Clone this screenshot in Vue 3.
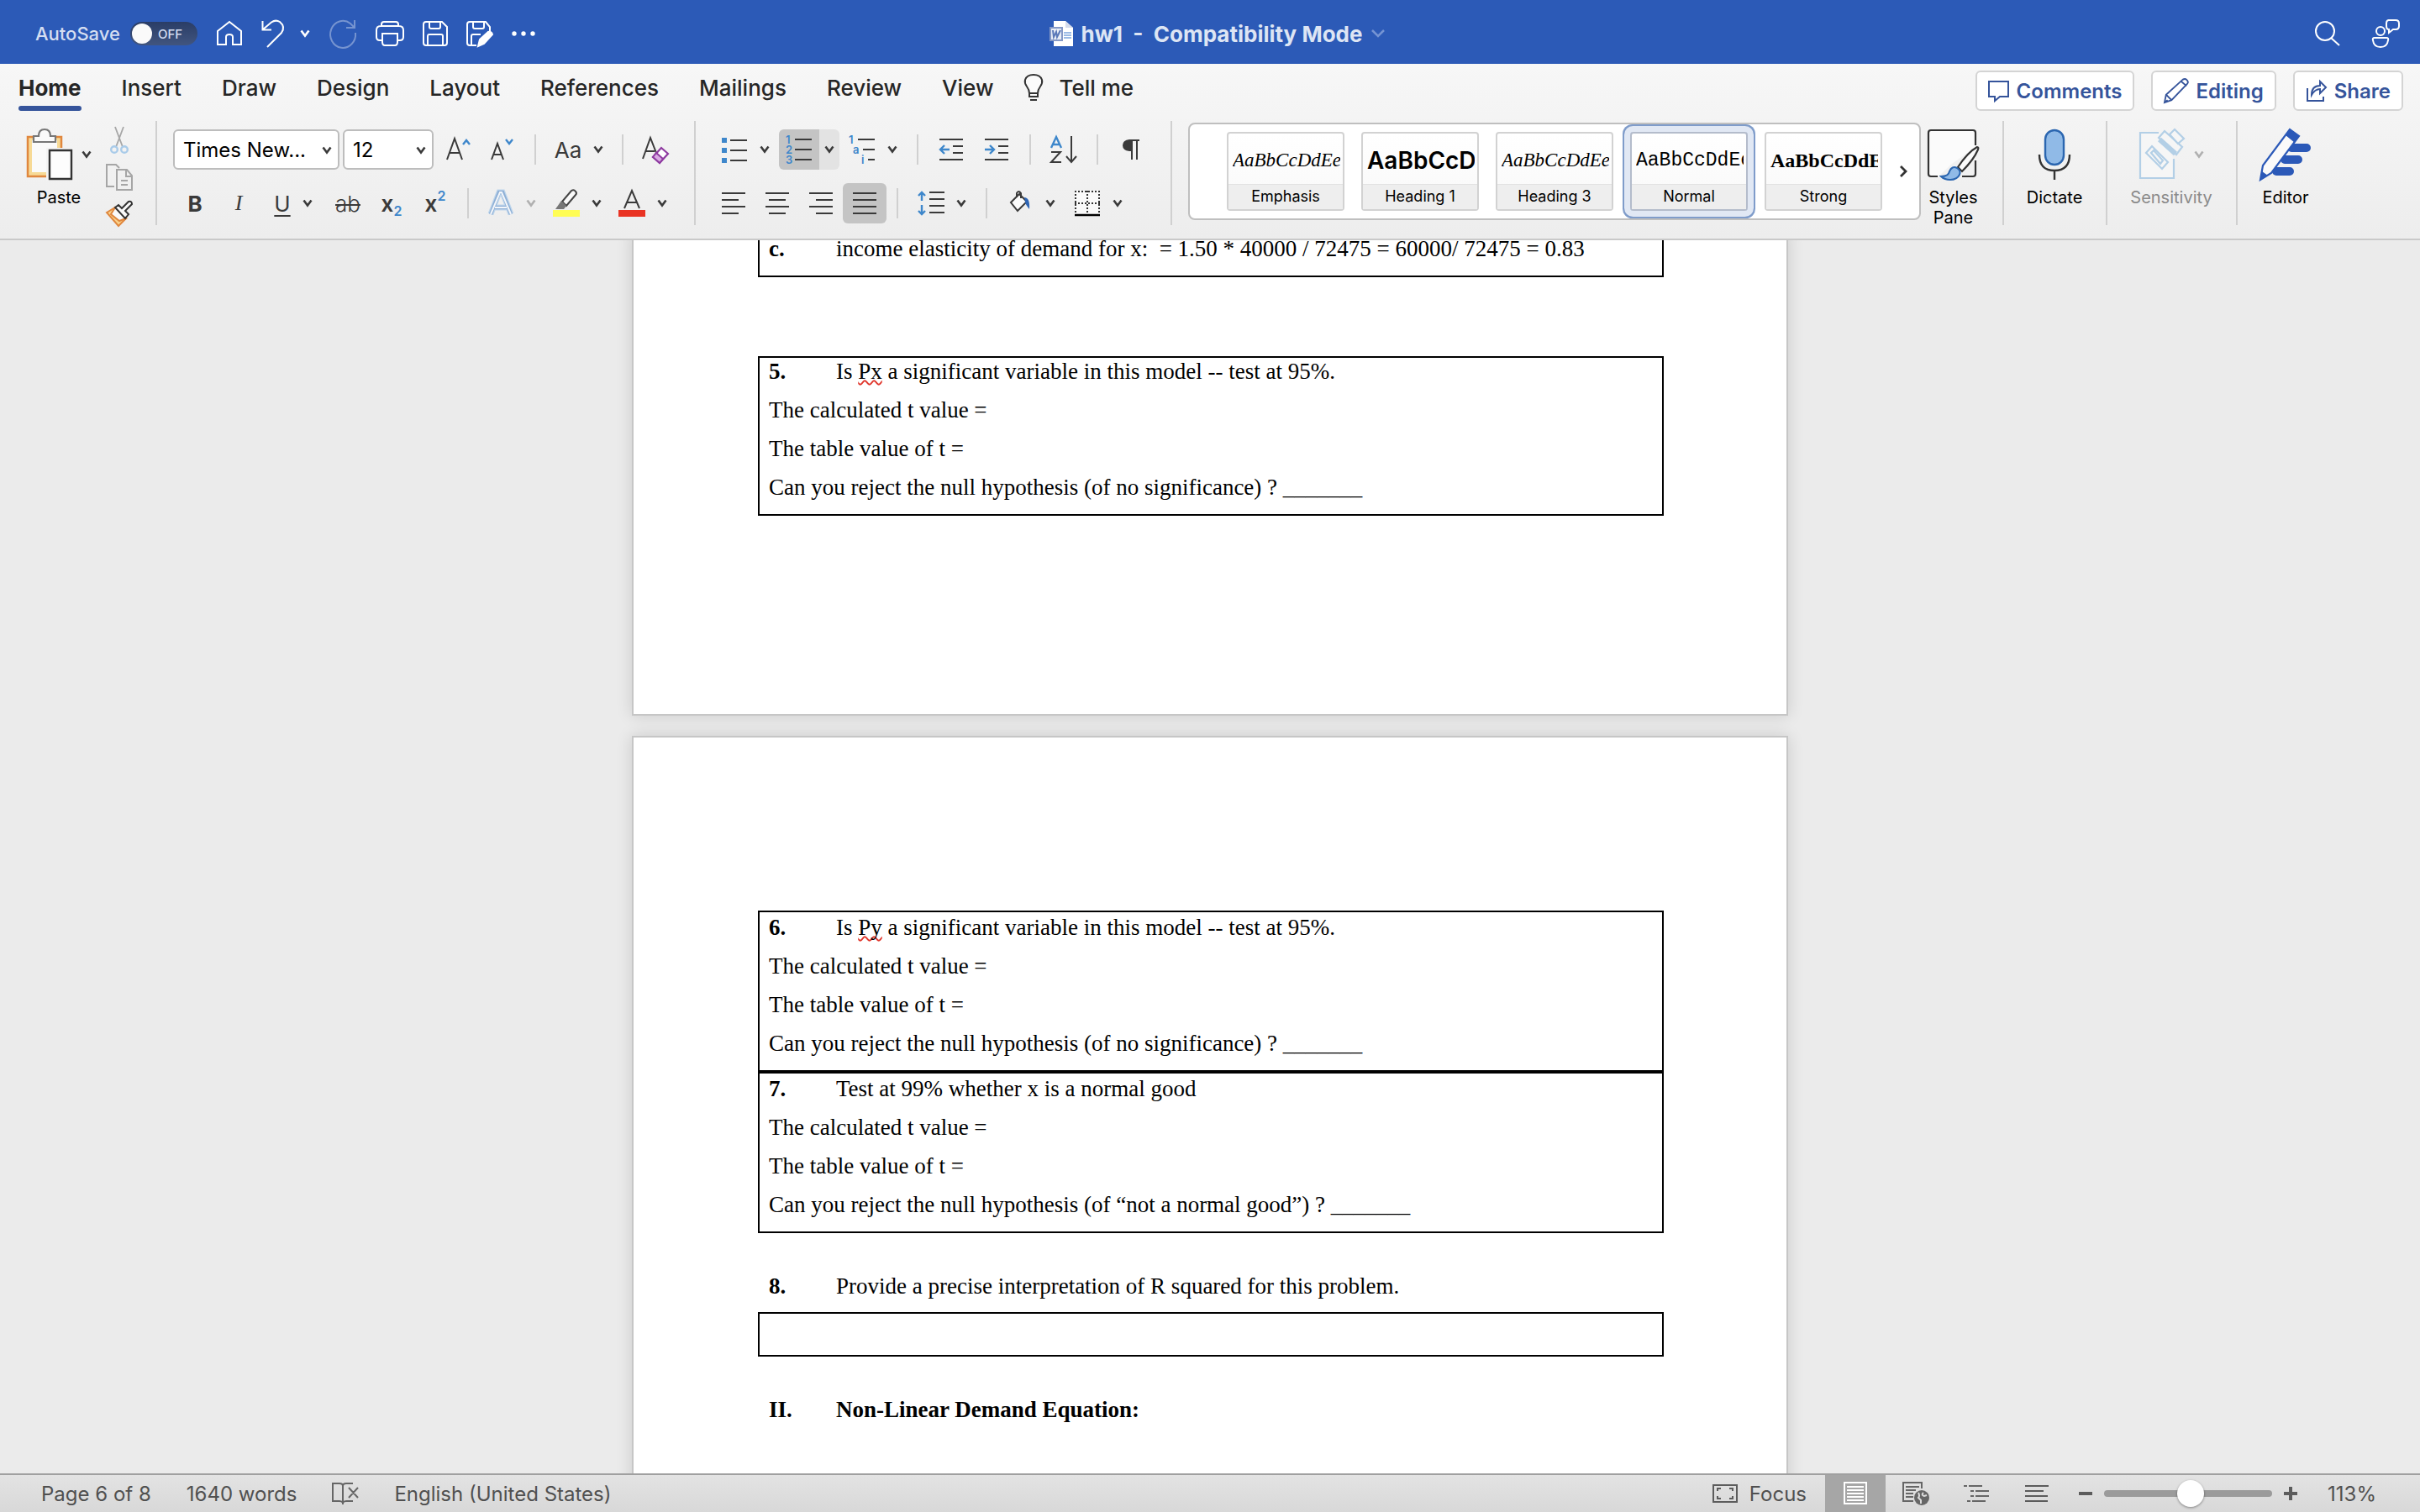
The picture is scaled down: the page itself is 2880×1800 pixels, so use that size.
<script setup>
import {h, ref} from "vue";

const tabs = ['Home', 'Insert', 'Draw', 'Design', 'Layout', 'References', 'Mailings', 'Review', 'View'];
const activeTab = ref('Home');
const autoSave = ref(false);
const fontName = ref('Times New...');
const fontSize = ref('12');
const zoom = ref(52);

const styleCards = [
    {name: 'Emphasis', sample: 'AaBbCcDdEe', look: 'serif-italic'},
    {name: 'Heading 1', sample: 'AaBbCcDd', look: 'sans-bold'},
    {name: 'Heading 3', sample: 'AaBbCcDdEe', look: 'serif-italic'},
    {name: 'Normal', sample: 'AaBbCcDdEe', look: 'mono'},
    {name: 'Strong', sample: 'AaBbCcDdEe', look: 'serif-bold'},
];
const activeStyle = ref('Normal');

const Chevron = () => h('svg', {class: 'chevron', viewBox: '0 0 12 10', width: 12, height: 10}, [
    h('path', {d: 'M1.5 1.5 6 7.5l4.5-6', fill: 'none', stroke: 'currentColor', 'stroke-width': 2.6}),
]);
</script>

<template>
    <div class="word">
        <header class="title-bar">
            <div class="quick-access">
                <label class="autosave">
                    <span>AutoSave</span>
                    <input v-model="autoSave" type="checkbox">
                    <span class="switch"><i></i>OFF</span>
                </label>
                <button aria-label="Home">
                    <svg width="32" height="32" viewBox="0 0 32 32" class="line"><path d="M2 13 16 2l14 11v16H20v-9q0-3-4-3t-4 3v9H2Z"/></svg>
                </button>
                <button aria-label="Undo" class="with-arrow">
                    <svg width="28" height="34" viewBox="0 0 28 34" class="line"><path d="M1.500 2v10.500H12M2 12 12 3.500q5-3.500 10-.5 7 6 2 13L7 33"/></svg>
                    <Chevron/>
                </button>
                <button aria-label="Redo" class="faded">
                    <svg width="34" height="34" viewBox="0 0 34 34" class="line"><path d="M32 16a15 16 0 1 1-6-11l4 4M31 1v9H21"/></svg>
                </button>
                <button aria-label="Print">
                    <svg width="34" height="32" viewBox="0 0 34 32" class="line"><path d="M7 7V5q0-3 3-3h14q3 0 3 3v2M8 24H5q-4 0-4-4v-8q0-5 5-5h22q5 0 5 5v8q0 4-4 4h-3M8 16h18v10q0 4-3 4H11q-3 0-3-4Z"/></svg>
                </button>
                <button aria-label="Save">
                    <svg width="30" height="32" viewBox="0 0 30 32" class="line"><path d="M1 5q0-3 3-3h19l6 6v19q0 3-3 3H4q-3 0-3-3ZM8 2v6q0 2 2 2h9q2 0 2-2V2M6 30V19q0-2 2-2h14q2 0 2 2v11"/></svg>
                </button>
                <button aria-label="Save as">
                    <svg width="32" height="32" viewBox="0 0 32 32" class="line"><path d="M12 30H4q-3 0-3-3V5q0-3 3-3h19l5 6v5M8 2v6q0 2 2 2h9q2 0 2-2V2M6 30V19q0-2 2-2h9"/><path d="m14 31 2-8 10-9q4-1 5 3L21 28Z" fill="#fff"/></svg>
                </button>
                <button aria-label="More commands">
                    <svg width="28" height="8" viewBox="0 0 28 8" fill="#fff"><circle cx="3" cy="4" r="2.700"/><circle cx="14" cy="4" r="2.700"/><circle cx="25" cy="4" r="2.700"/></svg>
                </button>
            </div>
            <h1 class="doc-title">
                <svg width="28" height="30" viewBox="0 0 28 30">
                    <path d="M5 0h14l9 8v22H5Z" fill="#fff"/><path d="M19 0v8h9Z" fill="#d5dcec"/>
                    <path d="M17 14h9M17 17h9M17 20h9" stroke="#7ba4dd" stroke-width="1.300"/>
                    <path d="M1 8h14v15H1Z" fill="#e8edf6" stroke="#8498c6" stroke-width="2"/>
                    <path d="m4 11 1 8 3-6 1 6 4-8" fill="none" stroke="#5b79b8" stroke-width="2"/>
                </svg>
                <span>hw1&nbsp; -&nbsp; Compatibility Mode</span>
                <svg width="18" height="12" viewBox="0 0 18 12"><path d="m2 2 7 7 7-7" fill="none" stroke="#7594d3" stroke-width="2.500"/></svg>
            </h1>
            <div class="title-actions">
                <button aria-label="Search">
                    <svg width="32" height="32" viewBox="0 0 32 32" class="line"><circle cx="13" cy="13" r="11"/><path d="m20 21 10 9"/></svg>
                </button>
                <button aria-label="Account">
                    <svg width="34" height="34" viewBox="0 0 34 34" class="line"><circle cx="11" cy="14" r="5"/><path d="M4 22h14q3 0 2 3-1 8-9 8t-9-8q-1-3 2-3ZM20 1h9q4 0 4 4v3q0 4-4 4h-3l-5 4v-4q-3 0-3-4V5q0-4 3-4Z"/></svg>
                </button>
            </div>
        </header>

        <section class="ribbon">
            <nav class="tabs">
                <button v-for="tab in tabs" :key="tab" class="tab" :class="{active: tab === activeTab}" @click="activeTab = tab">{{ tab }}</button>
                <button class="tab tell-me">
                    <svg width="24" height="32" viewBox="0 0 24 32" fill="none" stroke="#333" stroke-width="2"><path d="M7 23q0-4-3-8-3-4-2-8 2-6 10-6t10 6q1 4-2 8-3 4-3 8ZM7 23v4h10v-4M8 31h8" fill="#fbfbfb"/></svg>
                    Tell me
                </button>
                <div class="tab-actions">
                    <button>
                        <svg width="26" height="26" viewBox="0 0 26 26" class="line"><path d="M1 2h23v18H14l-6 5v-5H1Z"/></svg>
                        Comments
                    </button>
                    <button>
                        <svg width="30" height="32" viewBox="0 0 32 32" class="line"><path d="m1 31 2-10L24 2q3-2 5 0 3 3 1 5L10 28ZM3 21l7 7M22 4l7 6M1 31l4-3"/></svg>
                        Editing
                    </button>
                    <button>
                        <svg width="26" height="26" viewBox="0 0 26 26" class="line"><path d="M2 10v15h19v-5M7 18q0-11 10-11V2l7 7-7 7v-5q-6 0-10 7Z"/></svg>
                        Share
                    </button>
                </div>
            </nav>

            <div class="tools">
                <div class="clipboard">
                    <button class="big">
                        <span class="big-icon">
                            <svg width="56" height="62" viewBox="0 0 56 62">
                                <path d="M2 10h40v47H2Z" fill="#f7da96" stroke="#e0873e" stroke-width="2.500"/><path d="M7 14h30v38H7Z" fill="#fafafa"/>
                                <path d="M9 9h6q0-8 7-8t7 8h6v7H9Z" fill="#fafafa" stroke="#777" stroke-width="2.200"/>
                                <path d="M24 23h32v39H24Z" fill="#f4f4f4"/><path d="M28 26h26v34H28Z" fill="#fdfdfd" stroke="#333" stroke-width="2.400"/>
                            </svg>
                            <Chevron/>
                        </span>
                        Paste
                    </button>
                    <div class="clip-side">
                        <button aria-label="Cut">
                            <svg width="24" height="34" viewBox="0 0 24 34" fill="none" stroke="#a6a6a6" stroke-width="1.800"><path d="m7 1 9 24M17 1 8 25"/><circle cx="6" cy="28" r="3.800" stroke="#a9cbe9" stroke-width="2.400"/><circle cx="18" cy="28" r="3.800" stroke="#a9cbe9" stroke-width="2.400"/></svg>
                        </button>
                        <button aria-label="Copy">
                            <svg width="34" height="34" viewBox="0 0 34 34" fill="none" stroke="#a6a6a6" stroke-width="2"><path d="M11 28H2V2h11l4 4M14 8h12l6 7v17H14ZM25 8v8h7M19 21h8M19 26h8"/></svg>
                        </button>
                        <button aria-label="Format painter">
                            <svg width="34" height="32" viewBox="0 0 34 32" fill="#fafafa" stroke="#333" stroke-width="2"><path d="m2 15 10-6 13 13-9 9Z" fill="#f9d28b" stroke="#e0873e"/><path d="M12 9 7 17l10 8 8-3Z" stroke="#e0873e"/><path d="m12 9 4-3 4 4 8-8q4-1 4 3l-8 8 4 4-4 5Z"/></svg>
                        </button>
                    </div>
                </div>
                <i class="group-line"></i>

                <div class="group">
                    <div class="row">
                        <span class="combo font-name">
                            <select v-model="fontName" aria-label="Font name"><option>Times New...</option></select><Chevron/>
                        </span>
                        <span class="combo font-size">
                            <select v-model="fontSize" aria-label="Font size"><option>12</option></select><Chevron/>
                        </span>
                        <button class="tool" aria-label="Grow font">
                            <svg width="32" height="32" viewBox="0 0 32 32"><path d="m2 28 9-25 9 25M5 20h12" class="ink"/><path d="m21 10 4-5 4 5" class="accent"/></svg>
                        </button>
                        <button class="tool" aria-label="Shrink font">
                            <svg width="32" height="32" viewBox="0 0 32 32"><path d="m3 28 7-19 7 19M5 22h10" class="ink"/><path d="m20 4 4 5 4-5" class="accent"/></svg>
                        </button>
                        <i class="line-sep"></i>
                        <button class="drop" aria-label="Change case"><span class="case">Aa</span><Chevron/></button>
                        <i class="line-sep"></i>
                        <button class="tool" aria-label="Clear formatting">
                            <svg width="34" height="34" viewBox="0 0 34 34"><path d="m2 28 9-25 7 18M5 19h11" class="ink"/><path d="m14 26 10-11 8 7-10 11Z" fill="#fff" stroke="#8e3aa0" stroke-width="2.200"/><path d="m14 26 4-5 8 7-4 5Z" fill="#d9a9e3" stroke="#8e3aa0" stroke-width="2"/></svg>
                        </button>
                    </div>
                    <div class="row">
                        <button class="tool glyph bold">B</button>
                        <button class="tool glyph italic">I</button>
                        <button class="drop glyph" aria-label="Underline"><u>U</u><Chevron/></button>
                        <button class="tool glyph"><s>ab</s></button>
                        <button class="tool glyph script">x<sub>2</sub></button>
                        <button class="tool glyph script">x<sup>2</sup></button>
                        <i class="line-sep"></i>
                        <button class="drop dim" aria-label="Text effects">
                            <svg width="32" height="32" viewBox="0 0 32 32" fill="none"><path d="m4 29 10-26h4l10 26M9 21h14" stroke="#bfd6ec" stroke-width="7"/><path d="m4 29 10-26h4l10 26M9 21h14" stroke="#8fb0d6" stroke-width="4.500"/><path d="m4 29 11-26h2l11 26M9 21h14" stroke="#f3f6fa" stroke-width="2"/></svg>
                            <Chevron/>
                        </button>
                        <button class="drop" aria-label="Highlight">
                            <svg width="32" height="34" viewBox="0 0 32 34"><path d="m11 15 11-13q3-2 5 1 2 2 0 4L16 20Z" fill="#fafafa" stroke="#444" stroke-width="2"/><path d="M3 24 10 14l6 6-3 4Z" fill="#777"/><path d="M0 25h32v8H0Z" fill="#fffd54"/></svg>
                            <Chevron/>
                        </button>
                        <button class="drop" aria-label="Font color">
                            <svg width="32" height="34" viewBox="0 0 32 34"><path d="m7 23 9-21 9 21M10 16h12" class="ink"/><path d="M0 25h32v8H0Z" fill="#e93323"/></svg>
                            <Chevron/>
                        </button>
                    </div>
                </div>
                <i class="group-line"></i>

                <div class="group paragraph">
                    <div class="row wide">
                        <button class="drop" aria-label="Bullets">
                            <svg width="32" height="32" viewBox="0 0 32 32"><path d="M1 2h6v6H1ZM1 14h6v6H1ZM1 26h6v6H1Z" fill="#3e87cb"/><path d="M11 5h20M11 17h20M11 29h20" class="ink"/></svg>
                            <Chevron/>
                        </button>
                        <span class="split">
                            <button aria-label="Numbering">
                                <svg width="32" height="34" viewBox="0 0 32 34"><g class="digits"><text x="0" y="10">1</text><text x="0" y="22">2</text><text x="0" y="34">3</text></g><path d="M11 5h20M11 17h20M11 29h20" class="ink"/></svg>
                            </button>
                            <button aria-label="Numbering options"><Chevron/></button>
                        </span>
                        <button class="drop" aria-label="Multilevel list">
                            <svg width="32" height="34" viewBox="0 0 32 34"><g class="digits"><text x="0" y="10">1</text><text x="5" y="22">a</text><text x="15" y="34">i</text></g><path d="M11 5h20M17 17h14M23 29h8" class="ink"/></svg>
                            <Chevron/>
                        </button>
                        <i class="line-sep"></i>
                        <button class="tool" aria-label="Decrease indent">
                            <svg width="30" height="30" viewBox="0 0 30 30"><path d="M1 3h28M17 11h12M17 19h12M1 27h28" class="ink"/><path d="M13 15H2m5-5-5 5 5 5" class="accent"/></svg>
                        </button>
                        <button class="tool" aria-label="Increase indent">
                            <svg width="30" height="30" viewBox="0 0 30 30"><path d="M1 3h28M17 11h12M17 19h12M1 27h28" class="ink"/><path d="M1 15h11m-5-5 5 5-5 5" class="accent"/></svg>
                        </button>
                        <i class="line-sep"></i>
                        <button class="tool" aria-label="Sort">
                            <svg width="34" height="34" viewBox="0 0 34 34"><path d="m2 15 6-13 6 13M4 11h8" class="accent"/><path d="M2 20h11L2 32h12M26 1v31m-6-7 6 7 6-7" class="ink"/></svg>
                        </button>
                        <i class="line-sep"></i>
                        <button class="tool" aria-label="Show marks">
                            <svg width="22" height="26" viewBox="0 0 22 26"><path d="M11 1v14H9Q1 14 1 8t8-7Z" fill="#3a3a3a"/><path d="M10 2h11M12 1v24M18 1v24" class="ink"/></svg>
                        </button>
                    </div>
                    <div class="row">
                        <button class="tool" aria-label="Align left"><svg width="28" height="28" viewBox="0 0 28 28"><path d="M0 2h28M0 10h20M0 18h28M0 26h20" class="ink"/></svg></button>
                        <button class="tool" aria-label="Center"><svg width="28" height="28" viewBox="0 0 28 28"><path d="M0 2h28M4 10h20M0 18h28M4 26h20" class="ink"/></svg></button>
                        <button class="tool" aria-label="Align right"><svg width="28" height="28" viewBox="0 0 28 28"><path d="M0 2h28M8 10h20M0 18h28M8 26h20" class="ink"/></svg></button>
                        <button class="tool pressed" aria-label="Justify"><svg width="28" height="28" viewBox="0 0 28 28"><path d="M0 2h28M0 10h28M0 18h28M0 26h28" class="ink"/></svg></button>
                        <i class="line-sep"></i>
                        <button class="drop" aria-label="Line spacing">
                            <svg width="32" height="30" viewBox="0 0 32 30"><path d="M14 2h18M14 10h18M14 18h18M14 26h18" class="ink"/><path d="M5 12V2M1 6l4-4 4 4M5 17v11m-4-4 4 4 4-4" class="accent"/></svg>
                            <Chevron/>
                        </button>
                        <i class="line-sep"></i>
                        <button class="drop" aria-label="Shading">
                            <svg width="32" height="32" viewBox="0 0 32 32"><path d="m5 15 10-10 9 9-11 11ZM12 9V4q2-4 5 0v6" fill="#fbfbfb" stroke="#3a3a3a" stroke-width="2"/><path d="M21 9q7 0 6 14-5-6-5-9Z" fill="#2f66b5"/></svg>
                            <Chevron/>
                        </button>
                        <button class="drop" aria-label="Borders">
                            <svg width="32" height="32" viewBox="0 0 32 32"><path d="M1 1h30v28H1Z" fill="#fafafa"/><path d="M1 2h30M2 1v27M30 1v27M16 1v27M1 16h30" fill="none" stroke="#333" stroke-width="2" stroke-dasharray="2 2"/><path d="M1 30h30" stroke="#000" stroke-width="2.500"/></svg>
                            <Chevron/>
                        </button>
                    </div>
                </div>
                <i class="group-line"></i>

                <div class="gallery">
                    <button
                        v-for="card in styleCards"
                        :key="card.name"
                        class="card"
                        :class="{selected: card.name === activeStyle}"
                        @click="activeStyle = card.name"
                    >
                        <span class="sample" :class="card.look">{{ card.sample }}</span>
                        <span class="card-name">{{ card.name }}</span>
                    </button>
                    <button class="gallery-next" aria-label="More styles">
                        <svg width="12" height="16" viewBox="0 0 12 16"><path d="m2 2 6 6-6 6" fill="none" stroke="#333" stroke-width="2.800"/></svg>
                    </button>
                </div>

                <button class="big styles-pane">
                    <span class="big-icon">
                        <svg width="64" height="62" viewBox="0 0 64 62"><path d="M58 22V5q0-3-3-3H5Q2 2 2 5v49q0 3 3 3h9L30 42Z" fill="#fbfbfb"/><path d="M58 20V5q0-3-3-3H5Q2 2 2 5v49q0 3 3 3h8M58 38v16q0 3-3 3H42" fill="none" stroke="#333" stroke-width="2.200"/><path d="M37 46q12-18 23-24 2 0 1 3-5 12-19 26Z" fill="#fbfbfb" stroke="#333" stroke-width="2.200"/><path d="M17 57q9 0 10-6 3-7 9-4 5 3 3 8-3 6-11 6-7 0-11-4Z" fill="#90bae7" stroke="#2b66b0" stroke-width="2"/></svg>
                    </span>
                    Styles<br>Pane
                </button>
                <i class="group-line"></i>
                <button class="big dictate">
                    <span class="big-icon">
                        <svg width="40" height="62" viewBox="0 0 40 62" fill="none" stroke="#333" stroke-width="2.400"><rect x="9" y="2" width="22" height="41" rx="11" fill="#90bae7" stroke="#2b66b0"/><path d="M2 31q0 19 18 19t18-19M20 50v11"/></svg>
                    </span>
                    Dictate
                </button>
                <i class="group-line"></i>
                <button class="big sensitivity" disabled>
                    <span class="big-icon">
                        <svg width="56" height="62" viewBox="0 0 56 62" fill="#f6f6f6" stroke="#b3cfe6" stroke-width="2.200"><path d="M24 5H2v54h40V36"/><path d="m9 29 7-8 19 19-7 8ZM15 29l3-3 11 12-3 4Z"/><path d="m24 11 7-8 21 19-7 9Z"/><path d="m25 13 19 17" fill="none" stroke-width="6"/><path d="m37 7 6-6 11 11-7 6Z"/></svg>
                        <Chevron/>
                    </span>
                    Sensitivity
                </button>
                <i class="group-line"></i>
                <button class="big editor">
                    <span class="big-icon">
                        <svg width="62" height="62" viewBox="0 0 62 62"><path d="M38 23h18M30 37h16M20 51h16" stroke="#2b59b8" stroke-width="10" stroke-linecap="round"/><path d="m1 61 3-17L36 1l11 8-33 44Z" fill="#fafafa" stroke="#2b59b8" stroke-width="2.200"/><path d="m31 8 5-7 11 8-5 8ZM1 61l2-10 7 5Z" fill="#2b59b8"/></svg>
                    </span>
                    Editor
                </button>
            </div>
        </section>

        <main class="document">
            <article class="page first-page">
                <div class="box">
                    <p><b class="num">c.</b>income elasticity of demand for x:&nbsp; = 1.50 * 40000 / 72475 = 60000/ 72475 = 0.83</p>
                </div>
                <div class="box question-five">
                    <p><b class="num">5.</b>Is <span class="typo">Px</span> a significant variable in this model -- test at 95%.</p>
                    <p>The calculated t value =</p>
                    <p>The table value of t =</p>
                    <p>Can you reject the null hypothesis (of no significance) ? _______</p>
                </div>
            </article>

            <article class="page second-page">
                <div class="box paired">
                    <p><b class="num">6.</b>Is <span class="typo">Py</span> a significant variable in this model -- test at 95%.</p>
                    <p>The calculated t value =</p>
                    <p>The table value of t =</p>
                    <p>Can you reject the null hypothesis (of no significance) ? _______</p>
                </div>
                <div class="box paired">
                    <p><b class="num">7.</b>Test at 99% whether x is a normal good</p>
                    <p>The calculated t value =</p>
                    <p>The table value of t =</p>
                    <p>Can you reject the null hypothesis (of “not a normal good”) ? _______</p>
                </div>
                <p class="loose"><b class="num">8.</b>Provide a precise interpretation of R squared for this problem.</p>
                <div class="box answer"></div>
                <p class="loose"><b><span class="num">II.</span>Non-Linear Demand Equation:</b></p>
            </article>
        </main>

        <footer class="status-bar">
            <button>Page 6 of 8</button>
            <button>1640 words</button>
            <button aria-label="Proofing">
                <svg width="32" height="28" viewBox="0 0 32 28" fill="none" stroke="#666" stroke-width="2"><path d="M13 25q-1-2-4-2H1V2h8q4 0 4 3 0-3 4-3h8M13 4v23M13 25q1-2 4-2h8M20 7l11 12M31 7 20 19"/></svg>
            </button>
            <button>English (United States)</button>
            <div class="view-tools">
                <button class="focus">
                    <svg width="30" height="24" viewBox="0 0 30 24" fill="none" stroke="#5c5c5c" stroke-width="2"><path d="M1 2h28v20H1ZM6 9V6h4M20 6h4v3M24 15v3h-4M10 18H6v-3"/></svg>
                    Focus
                </button>
                <button class="view current" aria-label="Print layout">
                    <svg width="28" height="28" viewBox="0 0 28 28" fill="none" stroke="#fff" stroke-width="2"><path d="M1 1h26v25H1ZM4 6h20M4 10h20M4 14h20M4 18h20M4 22h20"/></svg>
                </button>
                <button class="view" aria-label="Web layout">
                    <svg width="32" height="28" viewBox="0 0 32 28" fill="none" stroke="#666" stroke-width="2"><path d="M13 23H1V1h22v7M4 6h16M4 10h12M4 14h9M4 18h9"/><circle cx="23" cy="19" r="9" fill="#666" stroke="none"/><path d="M19 13q2 4 0 6l3 3v4M25 13q-3 3 1 4l3-1" stroke="#ddd"/></svg>
                </button>
                <button class="view" aria-label="Outline">
                    <svg width="30" height="24" viewBox="0 0 30 24" stroke="#666" stroke-width="2"><path d="M0 3h4M6 3h16M8 9h4M14 9h16M8 15h4M14 15h16M4 21h4M10 21h16"/></svg>
                </button>
                <button class="view" aria-label="Draft">
                    <svg width="28" height="24" viewBox="0 0 28 24" stroke="#5c5c5c" stroke-width="2.200"><path d="M0 3h28M0 9h22M0 15h27M0 21h27"/></svg>
                </button>
                <button class="step" aria-label="Zoom out"><svg width="16" height="16" viewBox="0 0 16 16"><path d="M0 8h16" stroke="#5c5c5c" stroke-width="4"/></svg></button>
                <input v-model="zoom" type="range" min="0" max="100" aria-label="Zoom">
                <button class="step" aria-label="Zoom in"><svg width="16" height="16" viewBox="0 0 16 16"><path d="M0 8h16M8 0v16" stroke="#5c5c5c" stroke-width="4"/></svg></button>
                <button class="percent">113%</button>
            </div>
        </footer>
    </div>
</template>

<style>
body {
    margin: 0;
}
</style>

<style scoped>
.word {
    display: flex;
    flex-direction: column;
    height: 100vh;
    overflow: hidden;
    font-family: Inter, "Liberation Sans", sans-serif;
    background: #ebebeb;
    color: #000;
}
button {
    display: flex;
    align-items: center;
    justify-content: center;
    flex: none;
    margin: 0;
    padding: 0;
    border: 0;
    background: none;
    color: inherit;
    font: inherit;
    white-space: nowrap;
}
svg {
    display: block;
    flex: none;
    overflow: visible;
}
.line {
    fill: none;
    stroke: currentColor;
    stroke-width: 2;
}
.ink {
    fill: none;
    stroke: #3a3a3a;
    stroke-width: 2;
}
.accent {
    fill: none;
    stroke: #3e87cb;
    stroke-width: 2.4;
}
.chevron {
    color: #3a3a3a;
}

/* title bar */
.title-bar {
    display: grid;
    grid-template-columns: 1fr auto 1fr;
    align-items: center;
    flex: none;
    height: 76px;
    padding: 4px 24px 0 42px;
    box-sizing: border-box;
    background: #2c5ab7;
    color: #fff;
}
.quick-access {
    display: flex;
    align-items: center;
    gap: 22px;
}
.quick-access .chevron {
    color: #fff;
}
.autosave {
    display: flex;
    align-items: center;
    gap: 12px;
    color: #d5def1;
    font-size: 22px;
    font-weight: 500;
}
.autosave input {
    position: absolute;
    opacity: 0;
}
.switch {
    display: flex;
    align-items: center;
    gap: 7px;
    width: 80px;
    height: 28px;
    padding: 0 2px;
    box-sizing: border-box;
    border-radius: 14px;
    background: linear-gradient(#2a3d66, #41557f);
    font-size: 15px;
}
.switch i {
    width: 24px;
    height: 24px;
    border-radius: 50%;
    background: #fafafa;
}
.with-arrow {
    gap: 18px;
}
.faded {
    opacity: 0.35;
}
.doc-title {
    display: flex;
    align-items: center;
    gap: 10px;
    margin: 0;
    color: #dde5f4;
    font-size: 26px;
    font-weight: 700;
}
.title-actions {
    display: flex;
    justify-content: flex-end;
    gap: 36px;
}

/* ribbon */
.ribbon {
    flex: none;
    height: 208px;
    border-bottom: 2px solid #c9c9c9;
    background: linear-gradient(#f7f7f7, #ededed);
}
.tabs {
    display: flex;
    gap: 48px;
    height: 56px;
    padding: 0 20px 0 22px;
}
.tab {
    position: relative;
    color: #262626;
    font-size: 26px;
    font-weight: 500;
}
.tab.active {
    font-weight: 700;
}
.tab.active::after {
    content: "";
    position: absolute;
    inset: auto 0 0;
    height: 6px;
    border-radius: 3px;
    background: #35549b;
}
.tell-me {
    gap: 18px;
    margin-left: -12px;
}
.tab-actions {
    display: flex;
    align-items: flex-end;
    gap: 20px;
    margin-left: auto;
}
.tab-actions button {
    gap: 8px;
    height: 48px;
    padding: 0 13px;
    border: 2px solid #d4d4d4;
    border-radius: 6px;
    box-sizing: border-box;
    background: #fff;
    color: #35549b;
    font-size: 24px;
    font-weight: 600;
}
.tools {
    display: flex;
    align-items: flex-start;
    height: 124px;
    margin-top: 12px;
    padding-left: 31px;
}
.group-line {
    flex: none;
    width: 2px;
    height: 124px;
    margin: 0 19px 0 20px;
    background: #d0d0d0;
}
.clipboard {
    display: flex;
    gap: 10px;
}
.clip-side {
    display: flex;
    flex-direction: column;
    align-items: center;
    gap: 10px;
    width: 46px;
    padding-top: 6px;
}
.big {
    flex-direction: column;
    justify-content: flex-start;
    font-size: 20px;
    line-height: 24px;
    padding-top: 8px;
}
.big-icon {
    display: flex;
    align-items: center;
    gap: 10px;
    height: 64px;
    margin-bottom: 7px;
}
.styles-pane {
    width: 77px;
}
.dictate {
    width: 82px;
}
.sensitivity {
    width: 114px;
    color: #8a8a8a;
}
.sensitivity .chevron,
.dim .chevron {
    color: #b0b0b0;
}
.editor {
    width: 76px;
}
.group {
    display: flex;
    flex-direction: column;
    gap: 16px;
    padding-top: 10px;
}
.row {
    display: flex;
    align-items: center;
    height: 48px;
}
.tool {
    width: 52px;
    height: 48px;
}
.wide .tool {
    width: 54px;
}
.drop {
    gap: 14px;
    width: 78px;
    height: 48px;
}
.paragraph .drop {
    width: 80px;
}
.line-sep {
    width: 2px;
    height: 36px;
    margin: 0 12px;
    background: #d0d0d0;
}
.combo {
    position: relative;
    height: 48px;
    margin-right: 4px;
}
.combo select {
    width: 100%;
    height: 48px;
    padding: 0 10px;
    box-sizing: border-box;
    appearance: none;
    border: 2px solid #bdbdbd;
    border-radius: 6px;
    background: #fff;
    color: #000;
    font: 24px Inter, "Liberation Sans", sans-serif;
}
.combo .chevron {
    position: absolute;
    top: 20px;
    right: 9px;
}
.font-name {
    width: 198px;
}
.font-size {
    width: 108px;
}
.case {
    color: #3a3a3a;
    font-size: 26px;
}
.glyph {
    color: #3a3a3a;
    font-size: 26px;
}
.bold {
    font-weight: 700;
}
.italic {
    font-family: "Liberation Serif", serif;
    font-style: italic;
}
.glyph u {
    text-underline-offset: 4px;
    text-decoration-thickness: 2px;
}
.glyph s {
    font-size: 26px;
    font-weight: 300;
    text-decoration-thickness: 2px;
}
.script {
    padding: 7px 0;
    box-sizing: border-box;
    font-weight: 600;
}
.script sub,
.script sup {
    color: #3e87cb;
    font-size: 16px;
    line-height: 16px;
}
.script sub {
    align-self: flex-end;
}
.script sup {
    align-self: flex-start;
}
.split {
    display: flex;
    width: 72px;
    height: 48px;
    overflow: hidden;
    border-radius: 6px;
    background: #e3e3e3;
}
.split button {
    width: 24px;
}
.split button:first-child {
    width: 48px;
    background: #c4c4c4;
}
.digits {
    fill: #3e87cb;
    font-size: 13px;
    font-weight: 600;
}
.pressed {
    border-radius: 6px;
    background: #c4c4c4;
}

/* styles gallery */
.gallery {
    display: flex;
    align-items: center;
    gap: 20px;
    flex: none;
    width: 872px;
    height: 116px;
    margin-top: 2px;
    padding-left: 44px;
    box-sizing: border-box;
    border: 2px solid #bfbfbf;
    border-radius: 8px;
    background: #fff;
}
.card {
    flex-direction: column;
    align-items: stretch;
    width: 140px;
    height: 94px;
    box-sizing: border-box;
    border: 2px solid #d2d2d2;
    border-radius: 4px;
    background: linear-gradient(#fff, #f8f8f8);
}
.card.selected {
    border-color: #b4bccb;
    box-shadow: 0 0 0 7px #e1e8f4, 0 0 0 9px #7f9cca;
}
.sample {
    flex: 1;
    margin: 0 3px 0 5px;
    overflow: hidden;
    line-height: 64px;
    text-align: left;
}
.card-name {
    height: 29px;
    border-top: 1px solid #e2e2e2;
    background: #eeeeee;
    font-size: 18px;
    line-height: 28px;
}
.serif-italic {
    font-family: "Liberation Serif", serif;
    font-size: 23px;
    font-style: italic;
}
.serif-bold {
    font-family: "Liberation Serif", serif;
    font-size: 24px;
    font-weight: 700;
}
.sans-bold {
    font-size: 28px;
    font-weight: 600;
}
.mono {
    font-family: "Liberation Mono", monospace;
    font-size: 23px;
}

/* document */
.document {
    flex: 1;
    min-height: 0;
    overflow: hidden;
}
.page {
    width: 1376px;
    max-width: 100%;
    margin: 0 auto;
    padding: 0 146px 0 148px;
    border: 2px solid #c6c6c6;
    box-sizing: border-box;
    background: #fff;
    box-shadow: 0 0 18px rgba(0, 0, 0, 0.14);
    font-family: "Liberation Serif", serif;
    font-size: 27px;
    line-height: 30px;
}
.first-page {
    margin-top: -10px;
    padding-bottom: 236px;
}
.second-page {
    margin-top: 24px;
    padding-top: 206px;
    padding-bottom: 200px;
}
.box {
    padding: 1px 11px;
    border: 2px solid #000;
}
.question-five {
    margin-top: 94px;
}
.paired {
    padding: 3px 11px 1px;
}
.box p,
.loose {
    margin: 0;
    padding-bottom: 16px;
}
.loose {
    margin-top: 48px;
    padding-left: 13px;
}
.answer {
    height: 47px;
}
.num {
    display: inline-block;
    width: 80px;
}
.typo {
    text-decoration: underline wavy #e0352b 2px;
    text-decoration-skip-ink: none;
    text-underline-offset: 1px;
}

/* status bar */
.status-bar {
    display: flex;
    align-items: stretch;
    gap: 42px;
    flex: none;
    height: 46px;
    padding: 0 52px 0 49px;
    box-sizing: border-box;
    border-top: 2px solid #a0a0a0;
    background: linear-gradient(#e3e3e3, #d8d8d8);
    color: #505050;
    font-size: 24px;
}
.view-tools {
    display: flex;
    align-items: stretch;
    margin-left: auto;
}
.focus {
    gap: 14px;
    margin-right: 22px;
}
.view {
    width: 72px;
}
.current {
    background: #a6a6a6;
}
.step {
    width: 44px;
}
.view-tools input {
    width: 200px;
    height: 32px;
    margin: 6px 0;
    appearance: none;
    background: none;
}
.view-tools input::-webkit-slider-runnable-track {
    height: 8px;
    border-radius: 4px;
    background: #9b9b9b;
}
.view-tools input::-webkit-slider-thumb {
    width: 32px;
    height: 32px;
    margin-top: -12px;
    appearance: none;
    border-radius: 50%;
    background: #fff;
    box-shadow: 0 1px 3px rgba(0, 0, 0, 0.4);
}
.percent {
    width: 80px;
    justify-content: flex-end;
}
</style>
